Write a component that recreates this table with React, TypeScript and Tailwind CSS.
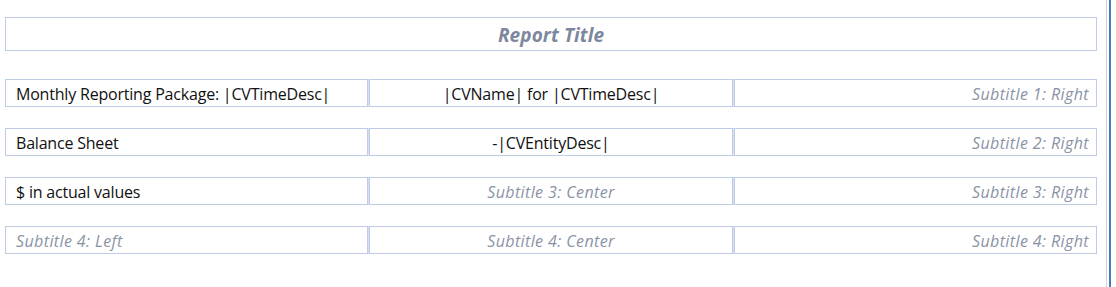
import React from "react";

const font = { fontFamily: '"Open Sans", "Noto Sans", sans-serif' };

type Cell = { text: string; placeholder?: boolean; align: "left" | "center" | "right" };

const rows: Cell[][] = [
  [
    { text: "Monthly Reporting Package: |CVTimeDesc|", align: "left" },
    { text: "|CVName| for |CVTimeDesc|", align: "center" },
    { text: "Subtitle 1: Right", align: "right", placeholder: true },
  ],
  [
    { text: "Balance Sheet", align: "left" },
    { text: "-|CVEntityDesc|", align: "center" },
    { text: "Subtitle 2: Right", align: "right", placeholder: true },
  ],
  [
    { text: "$ in actual values", align: "left" },
    { text: "Subtitle 3: Center", align: "center", placeholder: true },
    { text: "Subtitle 3: Right", align: "right", placeholder: true },
  ],
  [
    { text: "Subtitle 4: Left", align: "left", placeholder: true },
    { text: "Subtitle 4: Center", align: "center", placeholder: true },
    { text: "Subtitle 4: Right", align: "right", placeholder: true },
  ],
];

function CellBox({ c }: { c: Cell }) {
  const alignCls =
    c.align === "left"
      ? "justify-start pl-[10px]"
      : c.align === "center"
      ? "justify-center"
      : "justify-end pr-[7px]";
  return (
    <div
      className={`flex h-[28px] items-center border border-[#bfcce8] bg-white pt-[2px] ${alignCls}`}
    >
      <span
        className={`whitespace-nowrap text-[16px] leading-none ${
          c.placeholder
            ? "italic tracking-[0.4px] text-[#8a93a6]"
            : "tracking-[-0.2px] text-[#111111]"
        }`}
      >
        {c.text}
      </span>
    </div>
  );
}

export default function App() {
  return (
    <div className="flex h-[287px] w-[1116px] bg-white" style={font}>
      <div className="flex w-[1106px] flex-col pl-[5px] pt-[17px]">
        <div className="flex h-[34px] w-[1092px] items-center justify-center border border-[#bfcce8] pt-[2px]">
          <span className="text-[19px] font-bold italic leading-none tracking-[0.1px] text-[#7d879d]">
            Report Title
          </span>
        </div>
        <div className="mt-[28px] flex w-[1092px] flex-col gap-[21px]">
          {rows.map((r, i) => (
            <div key={i} className="grid grid-cols-3 gap-px bg-[#d6dff1]">
              {r.map((c, j) => (
                <CellBox key={j} c={c} />
              ))}
            </div>
          ))}
        </div>
      </div>
      <div className="h-full w-px bg-[#d4d4d4]" />
      <div className="h-full w-[2px] bg-white" />
      <div className="h-full w-[2px] bg-[#3c7fc4]" />
    </div>
  );
}
